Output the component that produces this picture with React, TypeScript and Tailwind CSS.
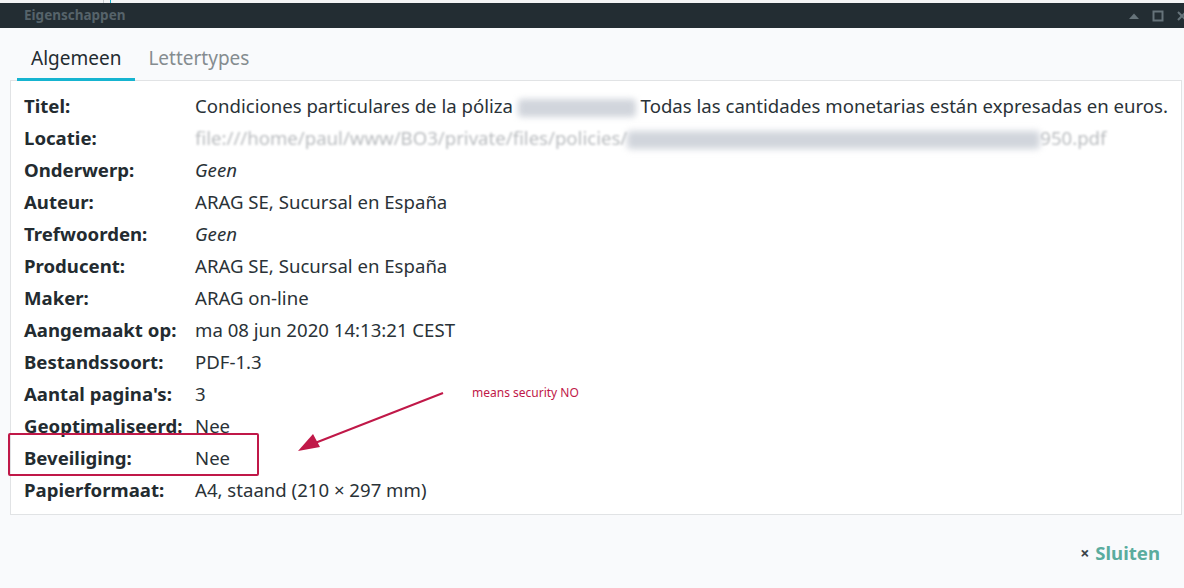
import type { ReactNode } from "react";

type Row = { label: string; value: ReactNode };

const Blur = ({ w, className = "" }: { w: number; className?: string }) => (
  <span
    className={`inline-block h-[18px] align-middle rounded bg-gray-300 blur-[3px] ${className}`}
    style={{ width: w }}
  />
);

const rows: Row[] = [
  {
    label: "Titel:",
    value: (
      <>
        Condiciones particulares de la póliza <Blur w={118} className="bg-[#d4d6d8]" /> Todas las cantidades
        monetarias están expresadas en euros.
      </>
    ),
  },
  {
    label: "Locatie:",
    value: (
      <span className="relative inline-block text-[#b9bcbf] blur-[1.2px]">
        file:///home/paul/www/BO3/private/files/policies/
        <Blur w={413} className="bg-[#d8dadc]" />
        950.pdf
      </span>
    ),
  },
  { label: "Onderwerp:", value: <i>Geen</i> },
  { label: "Auteur:", value: "ARAG SE, Sucursal en España" },
  { label: "Trefwoorden:", value: <i>Geen</i> },
  { label: "Producent:", value: "ARAG SE, Sucursal en España" },
  { label: "Maker:", value: "ARAG on-line" },
  { label: "Aangemaakt op:", value: "ma 08 jun 2020 14:13:21 CEST" },
  { label: "Bestandssoort:", value: "PDF-1.3" },
  { label: "Aantal pagina's:", value: "3" },
  { label: "Geoptimaliseerd:", value: "Nee" },
  { label: "Beveiliging:", value: "Nee" },
  { label: "Papierformaat:", value: "A4, staand (210 × 297 mm)" },
];

export default function App() {
  return (
    <div
      className="relative h-[588px] w-[1184px] overflow-hidden bg-[#f9fafc] text-[#232b30]"
      style={{ fontFamily: '"Noto Sans", "Open Sans", sans-serif' }}
    >
      {/* strip of the window behind */}
      <div className="relative h-[3px] bg-[#f3f4f5]">
        <div className="absolute left-[103px] top-0 h-[3px] w-px bg-[#c8ccd0]" />
        <div className="absolute left-[110px] top-0 h-[3px] w-px bg-[#17b3d0]" />
      </div>

      {/* title bar */}
      <div className="flex h-[25px] items-center justify-between bg-[#232d33] pl-6">
        <span className="text-[13.5px] font-bold text-[#56636a]">Eigenschappen</span>
        <div className="flex items-center gap-[12px] text-[#66737a] translate-x-[4px]">
          <svg width="12" height="8" viewBox="0 0 12 8">
            <path d="M1 7 L6 1.5 L11 7 Z" fill="currentColor" />
          </svg>
          <svg width="12" height="12" viewBox="0 0 12 12">
            <rect x="1.5" y="1.5" width="9" height="9" fill="none" stroke="currentColor" strokeWidth="2" />
          </svg>
          <svg width="12" height="12" viewBox="0 0 12 12">
            <path d="M2 2 L10 10 M10 2 L2 10" stroke="currentColor" strokeWidth="2" />
          </svg>
        </div>
      </div>

      {/* tabs */}
      <div className="flex h-[53px] items-end pl-[17px]">
        <div className="flex h-full items-center border-b-[3px] border-[#16b4d0] px-[14px] pt-[10px] text-[19px] text-[#232b30]">
          Algemeen
        </div>
        <div className="flex h-full items-center px-[13px] pt-[7px] text-[19px] text-[#858c90]">Lettertypes</div>
      </div>

      {/* panel */}
      <div className="mx-[10px] mr-[2px] -mt-px border border-[#e1e3e5] bg-white pb-[8px] pl-[13px] pt-[9px]">
        {rows.map((r) => (
          <div key={r.label} className="grid h-[32px] grid-cols-[171px_1fr] items-center text-[18.6px] whitespace-nowrap">
            <span className="font-bold text-[#232b30]">{r.label}</span>
            <span className="text-[#2a3237]">{r.value}</span>
          </div>
        ))}
      </div>

      {/* footer */}
      <div className="flex justify-end pr-[24px] pt-[24px]">
        <button type="button" className="flex items-center gap-[6px] text-[18.6px] font-bold text-[#5aac9e]">
          <span className="text-[16px] text-[#3c4449]">×</span>
          Sluiten
        </button>
      </div>

      {/* annotation */}
      <div className="absolute left-[8px] top-[433px] h-[43px] w-[251px] rounded-[2px] border-2 border-[#c01848]" />
      <svg className="absolute left-0 top-0" width="1184" height="588">
        <line x1="443" y1="393" x2="315" y2="443" stroke="#c01848" strokeWidth="2" />
        <path d="M298 451 L313 434 L320 447 Z" fill="#c01848" />
      </svg>
      <span className="absolute left-[472px] top-[384px] text-[12px] text-[#c01848]">means security NO</span>
    </div>
  );
}
